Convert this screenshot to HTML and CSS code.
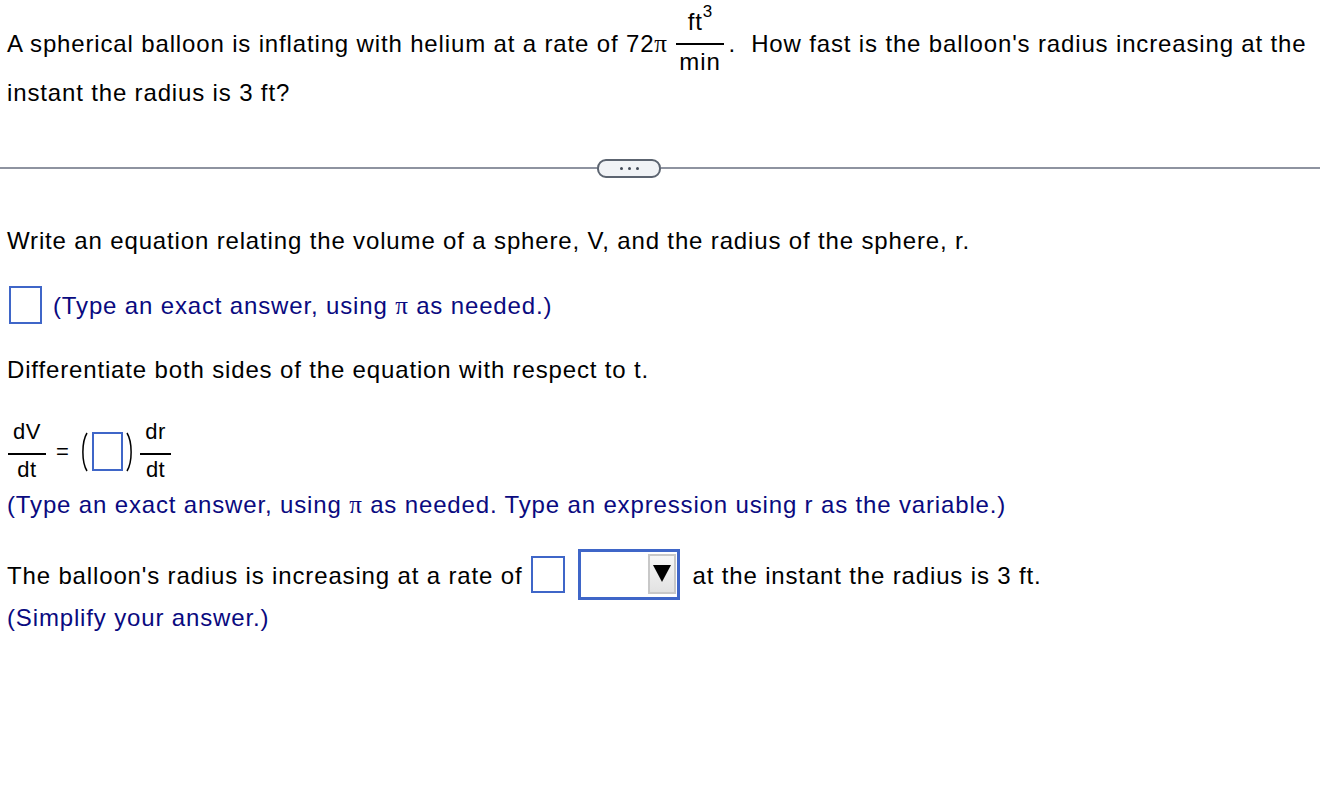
FILE: index.html
```html
<!DOCTYPE html>
<html>
<head>
<meta charset="utf-8">
<link rel="stylesheet" href="styles.css">
</head>
<body>
<div class="page">
  <div class="question">
    <p class="q-text">A spherical balloon is inflating with helium at a rate of 72<span class="pi">π</span> <span class="frac unit"><span class="num">ft<span class="sup">3</span></span><span class="den">min</span></span>.&nbsp; How fast is the balloon's radius increasing at the instant the radius is 3 ft?</p>
  </div>
  <div class="divider">
    <span class="line"></span>
    <span class="pill"><span class="dot"></span><span class="dot"></span><span class="dot"></span></span>
    <span class="line"></span>
  </div>
  <div class="work">
    <p class="step first">Write an equation relating the volume of a sphere, V, and the radius of the sphere, r.</p>
    <div class="answer-row"><span class="box big"></span><span class="hint">(Type an exact answer, using <span class="pi">π</span> as needed.)</span></div>
    <p class="step second">Differentiate both sides of the equation with respect to t.</p>
    <div class="deriv">
      <span class="dfrac"><span class="num">dV</span><span class="den">dt</span></span>
      <span class="eq">=</span>
      <svg class="paren" width="10" height="40" viewBox="0 0 10 40"><path d="M8 1 C2.5 10 2.5 30 8 39" fill="none" stroke="#000" stroke-width="1.5"/></svg>
      <span class="box mid"></span>
      <svg class="paren right" width="10" height="40" viewBox="0 0 10 40"><path d="M2 1 C7.5 10 7.5 30 2 39" fill="none" stroke="#000" stroke-width="1.5"/></svg>
      <span class="dfrac"><span class="num">dr</span><span class="den">dt</span></span>
    </div>
    <p class="hint block">(Type an exact answer, using <span class="pi">π</span> as needed. Type an expression using r as the variable.)</p>
    <div class="rate-row">
      <span class="rate-text">The balloon's radius is increasing at a rate of</span>
      <span class="box big"></span>
      <span class="select"><span class="arrow"></span></span>
      <span class="rate-text">at the instant the radius is 3 ft.</span>
    </div>
    <p class="hint block simplify">(Simplify your answer.)</p>
  </div>
</div>
</body>
</html>
```
FILE: styles.css
```css
html, body {
  margin: 0;
  padding: 0;
  background: #ffffff;
}
body {
  font-family: "Liberation Sans", Arial, sans-serif;
  font-size: 24px;
  letter-spacing: 0.85px;
  color: #000000;
}
p { margin: 0; }
.pi {
  font-family: "Liberation Serif", "Times New Roman", serif;
  font-size: 25px;
}
.question {
  padding: 10px 7px 0;
}
.q-text {
  line-height: 38px;
}
.frac {
  display: inline-flex;
  flex-direction: column;
  align-items: stretch;
  text-align: center;
  vertical-align: 22px;
  line-height: 24px;
  margin: 0 5px 0 1px;
}
.frac .num {
  border-bottom: 2px solid #000;
  padding: 0 3px 6px;
  position: relative;
}
.frac .den {
  padding: 5px 3px 0;
}
.sup {
  position: relative;
  top: -13px;
  font-size: 17px;
  letter-spacing: 0;
}
.divider {
  display: flex;
  align-items: center;
  margin-top: 46px;
  height: 20px;
}
.line {
  flex: 1;
  height: 2px;
  background: #8e93a0;
}
.divider .line:first-child {
  flex: 0 0 597px;
}
.divider .line:last-child {
  margin-right: 2px;
}
.pill {
  display: flex;
  align-items: center;
  justify-content: center;
  gap: 5px;
  width: 60px;
  height: 15px;
  border: 2px solid #5c6470;
  border-radius: 9px;
  background: #f1f3f6;
}
.dot {
  width: 3px;
  height: 3px;
  border-radius: 50%;
  background: #444c58;
}
.work {
  padding: 0 7px;
}
.step {
  line-height: 30px;
}
.step.first {
  margin-top: 48px;
}
.answer-row {
  display: flex;
  align-items: center;
  gap: 11px;
  margin-top: 30px;
  padding-left: 2px;
  height: 38px;
}
.answer-row .hint {
  position: relative;
  top: 1px;
}
.box {
  display: inline-block;
  box-sizing: border-box;
  border: 2px solid #3f66c8;
  background: #fff;
  flex: none;
}
.box.big {
  width: 33px;
  height: 38px;
}
.hint {
  color: #0a0a80;
}
.step.second {
  margin-top: 31px;
}
.deriv {
  display: flex;
  align-items: center;
  margin-top: 35px;
  height: 61px;
  padding-left: 1px;
  letter-spacing: 0.5px;
}
.dfrac {
  display: inline-flex;
  flex-direction: column;
  text-align: center;
  font-size: 22px;
  line-height: 22px;
  flex: none;
}
.dfrac .num {
  border-bottom: 2px solid #000;
  padding: 0 5px 10px;
}
.dfrac .den {
  padding: 4px 5px 0;
}
.eq {
  margin: 0 10px 0 10px;
  font-size: 22px;
  position: relative;
  top: 1px;
}
.paren {
  flex: none;
  position: relative;
  top: 1px;
}
.box.mid {
  width: 31px;
  height: 39px;
  margin: 0 2px 0 3px;
  position: relative;
  top: 1px;
}
.paren.right {
  margin-right: 5px;
}
.hint.block {
  line-height: 30px;
}
.deriv + .hint.block {
  margin-top: 9px;
}
.rate-row {
  display: flex;
  align-items: center;
  margin-top: 29px;
  height: 51px;
}
.rate-row .box.big {
  margin-left: 9px;
  width: 34px;
  height: 37px;
}
.select {
  position: relative;
  display: inline-block;
  box-sizing: border-box;
  width: 102px;
  height: 51px;
  border: 3px solid #3f66c8;
  background: #fff;
  margin: 0 12px 0 13px;
  flex: none;
}
.rate-text {
  position: relative;
  top: 1px;
}
.arrow {
  position: absolute;
  right: 1px;
  top: 2px;
  width: 28px;
  height: 40px;
  box-sizing: border-box;
  border: 2px solid #c8c8c8;
  background: linear-gradient(#f7f7f7, #e2e2e2);
}
.arrow::after {
  content: "";
  position: absolute;
  left: 3px;
  top: 9px;
  border-left: 9.5px solid transparent;
  border-right: 9.5px solid transparent;
  border-top: 17px solid #000;
}
.hint.simplify {
  margin-top: 3px;
}
```
